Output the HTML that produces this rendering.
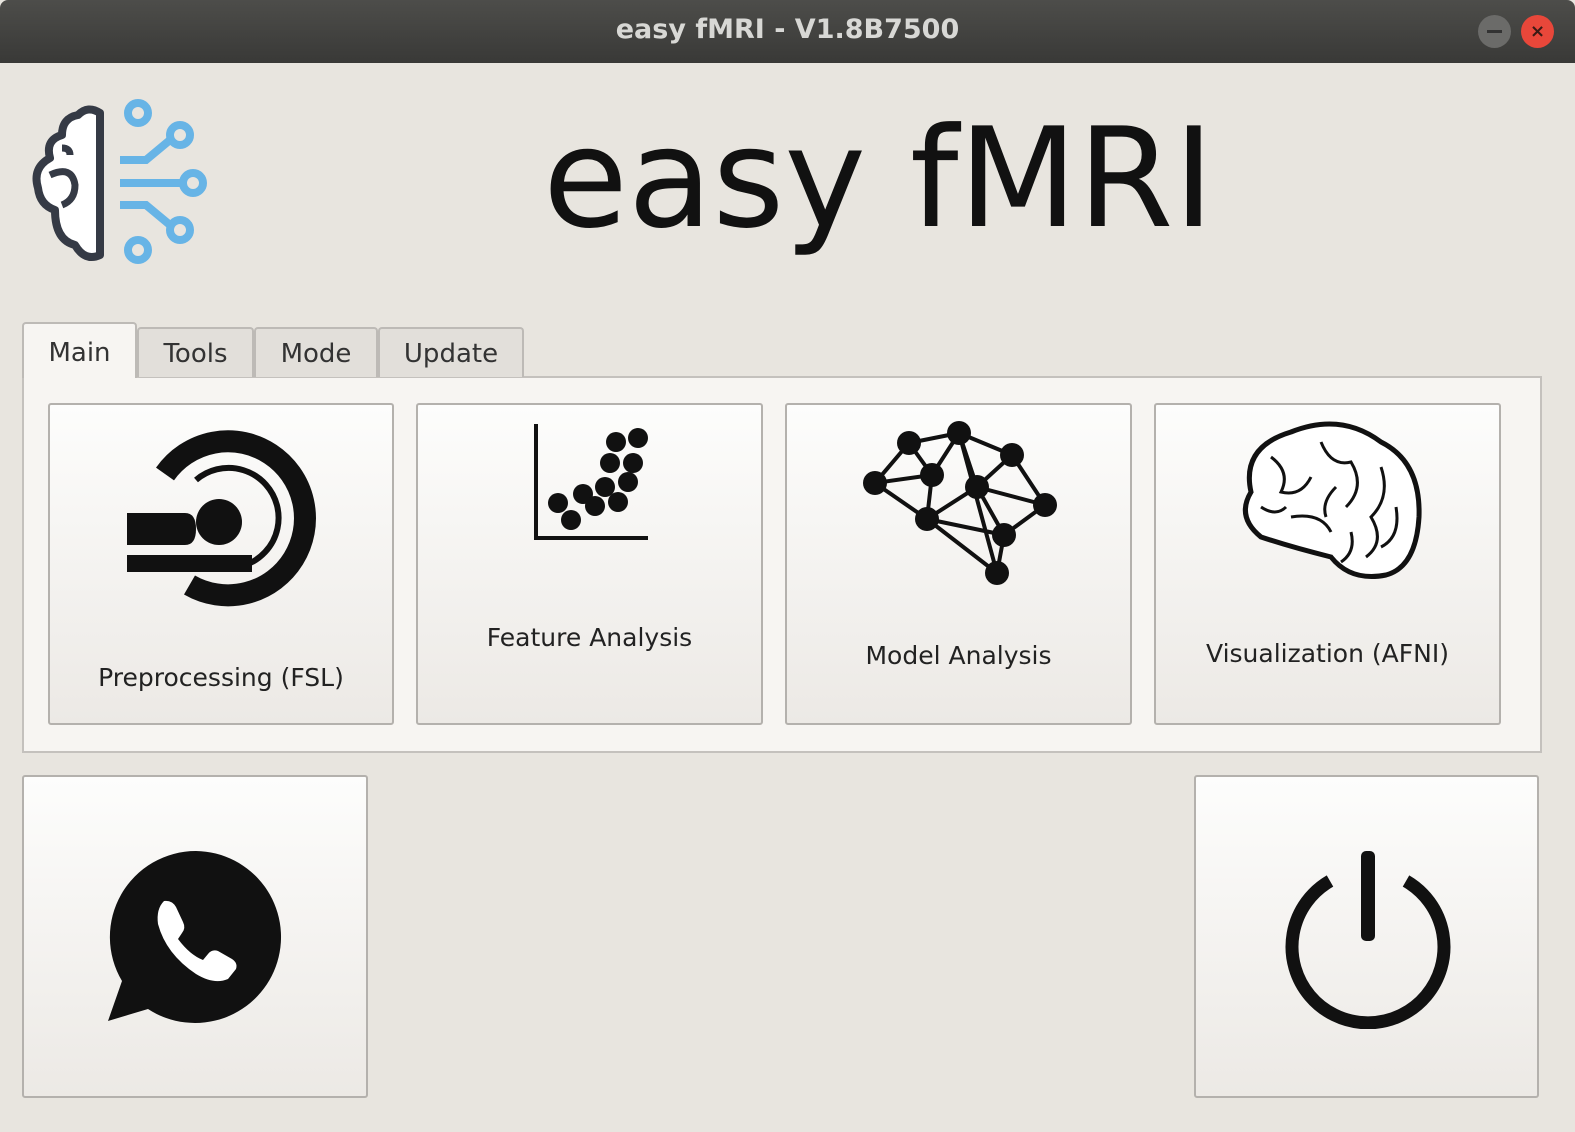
<!DOCTYPE html>
<html><head><meta charset="utf-8"><style>
body{margin:0;width:1575px;height:1132px;background:#e8e5df;font-family:"DejaVu Sans","Liberation Sans",sans-serif;position:relative;overflow:hidden}
.tb{position:absolute;left:0;top:0;width:1575px;height:63px;background:linear-gradient(#4d4d4a,#393937);border-radius:8px 8px 0 0}
.tt{position:absolute;left:0;width:1575px;top:14px;text-align:center;color:#d8d8d5;font-size:27px;font-weight:bold}
.btn{position:absolute;border:2px solid #b4b1ad;border-radius:3px;background:linear-gradient(#fdfdfc,#ece9e5);box-sizing:border-box}
.lbl{position:absolute;left:0;right:0;text-align:center;font-size:25px;color:#222}
.tab{position:absolute;top:327px;height:50px;border:2px solid #bdbab6;border-bottom:none;background:#e2dfda;border-radius:4px 4px 0 0;box-sizing:border-box;font-size:26px;color:#333;text-align:center;line-height:50px}
</style></head><body>
<div class="tb"><div class="tt">easy fMRI - V1.8B7500</div>
<div style="position:absolute;left:1478px;top:15px;width:33px;height:33px;border-radius:50%;background:#6b6b69"><div style="position:absolute;left:9px;top:15px;width:15px;height:3px;background:#333"></div></div>
<div style="position:absolute;left:1521px;top:15px;width:33px;height:33px;border-radius:50%;background:#e8473a;color:#3a1a15;font-size:18px;font-weight:bold;text-align:center;line-height:33px">×</div>
</div>
<svg style="position:absolute;left:20px;top:95px" width="200" height="180" viewBox="20 95 200 180">
<path d="M100 113 Q88 105 78 115 Q62 118 62 135 Q45 140 50 158 Q32 168 38 188 Q40 205 55 210 Q55 240 75 245 Q85 262 100 255 Z" fill="#fff" stroke="#353a45" stroke-width="8" stroke-linejoin="round"/>
<path d="M62 148 Q70 148 70 155 M50 175 Q72 165 75 185 Q75 200 62 205" fill="none" stroke="#353a45" stroke-width="7"/>
<g fill="none" stroke="#67b4e6" stroke-width="8"><circle cx="138" cy="113" r="10"/><circle cx="180" cy="135" r="10"/><circle cx="193" cy="183" r="10"/><circle cx="180" cy="230" r="10"/><circle cx="138" cy="250" r="10"/>
<path d="M120 160 H146 L170 140 M120 183 H183 M120 205 H146 L170 225"/></g></svg>
<div style="position:absolute;left:543px;top:89px;font-size:138px;color:#111;line-height:180px">easy fMRI</div>
<div style="position:absolute;left:22px;top:376px;width:1520px;height:377px;background:#f7f5f2;border:2px solid #c4c1bd;box-sizing:border-box"></div>
<div class="tab" style="left:22px;top:322px;height:56px;width:115px;background:#f7f5f2;line-height:58px">Main</div>
<div class="tab" style="left:137px;width:117px">Tools</div>
<div class="tab" style="left:254px;width:124px">Mode</div>
<div class="tab" style="left:378px;width:146px">Update</div>
<div class="btn" style="left:48px;top:403px;width:346px;height:322px">
<svg style="position:absolute;left:-2px;top:-2px" width="346" height="322" viewBox="48 403 346 322">
<path d="M165 474 A77 77 0 1 1 189.5 585" fill="none" stroke="#111" stroke-width="22"/>
<path d="M196 480 A50 50 0 1 1 219 567" fill="none" stroke="#111" stroke-width="6"/>
<path d="M127 513 H185 Q196 513 196 529 Q196 545 185 545 H127 Z" fill="#111"/>
<circle cx="219" cy="522" r="23" fill="#111"/>
<rect x="127" y="555" width="125" height="17" fill="#111"/>
</svg>
<div class="lbl" style="top:258px">Preprocessing (FSL)</div></div>
<div class="btn" style="left:416px;top:403px;width:347px;height:322px">
<svg style="position:absolute;left:110px;top:15px" width="125" height="125"><path d="M8 4 V118 H120" stroke="#111" stroke-width="4" fill="none"/><g fill="#111"><circle cx="30" cy="83" r="10"/><circle cx="55" cy="74" r="10"/><circle cx="77" cy="67" r="10"/><circle cx="100" cy="62" r="10"/><circle cx="43" cy="100" r="10"/><circle cx="67" cy="86" r="10"/><circle cx="90" cy="82" r="10"/><circle cx="82" cy="43" r="10"/><circle cx="105" cy="43" r="10"/><circle cx="110" cy="18" r="10"/><circle cx="88" cy="22" r="10"/></g></svg>
<div class="lbl" style="top:218px">Feature Analysis</div></div>
<div class="btn" style="left:785px;top:403px;width:347px;height:322px">
<svg style="position:absolute;left:70px;top:10px" width="210" height="175"><g stroke="#111" stroke-width="4" fill="none"><path d="M52 28 L102 18 L155 40 L188 90 L147 120 L140 158 L70 104 L18 68 Z M52 28 L18 68 M52 28 L75 60 L102 18 L120 72 L155 40 M75 60 L18 68 M75 60 L70 104 L120 72 L147 120 M120 72 L188 90 M70 104 L147 120 M102 18 L140 158"/></g><g fill="#111"><circle cx="52" cy="28" r="12"/><circle cx="102" cy="18" r="12"/><circle cx="155" cy="40" r="12"/><circle cx="188" cy="90" r="12"/><circle cx="147" cy="120" r="12"/><circle cx="140" cy="158" r="12"/><circle cx="70" cy="104" r="12"/><circle cx="18" cy="68" r="12"/><circle cx="75" cy="60" r="12"/><circle cx="120" cy="72" r="12"/></g></svg>
<div class="lbl" style="top:236px">Model Analysis</div></div>
<div class="btn" style="left:1154px;top:403px;width:347px;height:322px">
<svg style="position:absolute;left:75px;top:12px" width="195" height="165"><path d="M20 75 Q10 30 60 15 Q110 -5 150 25 Q190 45 188 100 Q185 150 155 158 Q120 165 100 140 Q60 130 30 120 Q5 100 20 75Z" fill="#fff" stroke="#111" stroke-width="5"/><g stroke="#111" stroke-width="3" fill="none"><path d="M40 40 Q60 55 50 75 Q70 80 80 60 M90 25 Q100 50 120 45 Q135 70 115 90 M150 50 Q160 80 140 100 Q155 125 135 140 M60 100 Q90 95 100 115 M30 90 Q45 100 55 90 M105 70 Q90 85 95 100 M165 90 Q170 120 150 130 M120 115 Q125 135 110 145"/></g></svg>
<div class="lbl" style="top:234px">Visualization (AFNI)</div></div>
<div class="btn" style="left:22px;top:775px;width:346px;height:323px">
<svg style="position:absolute;left:82px;top:72px" width="180" height="180" viewBox="0 0 180 180"><path d="M90 2 A86 86 0 1 1 42 160 L2 172 L16 132 A86 86 0 0 1 90 2Z" fill="#111"/><path d="M58 52 Q50 60 52 75 Q60 105 90 125 Q108 136 122 130 L130 120 Q132 114 126 110 L112 102 Q106 100 102 105 L97 111 Q84 106 72 90 L76 84 Q80 79 77 73 L70 58 Q66 51 58 52Z" fill="#fff"/></svg></div>
<div class="btn" style="left:1194px;top:775px;width:345px;height:323px">
<svg style="position:absolute;left:82px;top:72px" width="180" height="180"><path d="M52 32 A76 76 0 1 0 128 32" fill="none" stroke="#111" stroke-width="13"/><rect x="83" y="2" width="14" height="90" rx="5" fill="#111"/></svg></div>
</body></html>
